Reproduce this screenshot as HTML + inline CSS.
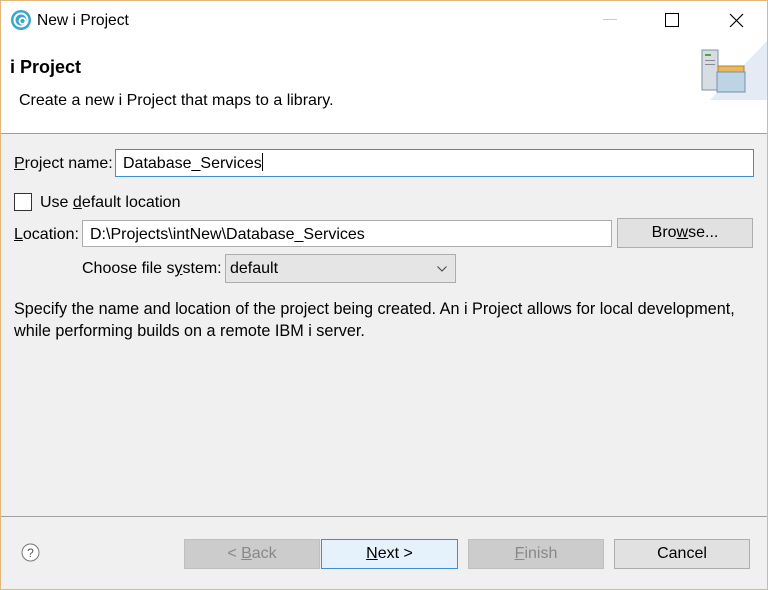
<!DOCTYPE html>
<html><head><style>
*{margin:0;padding:0;box-sizing:border-box}
body{width:768px;height:590px;overflow:hidden;background:#f0f0f0;font-family:"Liberation Sans",sans-serif;font-size:16px;color:#000;position:relative}
.a{position:absolute;white-space:nowrap}
.frame{position:absolute;left:0;top:0;width:768px;height:590px;border:1px solid #e2b77a;pointer-events:none}
.inp{position:absolute;background:#fff;border:1px solid #adadad;padding-left:7px;line-height:24px}
.btn{position:absolute;border:1px solid #adadad;background:#e1e1e1;text-align:center;line-height:28px}
u{text-decoration:underline}
</style></head><body>
<div class="a" style="left:0;top:0;width:768px;height:133px;background:#fff"></div>
<div class="a" style="left:0;top:133px;width:768px;height:1px;background:#a0a0a0"></div>
<svg class="a" style="left:10px;top:9px" width="22" height="22" viewBox="0 0 22 22"><circle cx="11" cy="11" r="10" fill="#3aa6c9"/><circle cx="11" cy="11" r="6.5" fill="none" stroke="#fff" stroke-width="2"/><circle cx="12.5" cy="12" r="3" fill="none" stroke="#fff" stroke-width="1.8"/></svg>
<div class="a" style="left:37px;top:12px;font-size:15.6px">New i Project</div>
<div class="a" style="left:603px;top:19px;width:14px;height:1px;background:#ccc"></div>
<div class="a" style="left:665px;top:13px;width:14px;height:14px;border:1px solid #000"></div>
<svg class="a" style="left:729px;top:13px" width="15" height="15"><path d="M1 1L14 14M14 1L1 14" stroke="#000" stroke-width="1.2"/></svg>
<div class="a" style="left:10px;top:57px;font-size:18px;font-weight:bold">i Project</div>
<div class="a" style="left:19px;top:92px">Create a new i Project that maps to a library.</div>
<svg class="a" style="left:690px;top:40px" width="78" height="60"><path d="M78 0 L78 60 L20 60 Z" fill="#e4ebf5"/><rect x="12" y="10" width="16" height="40" fill="#d8dde4" stroke="#8090a0"/><rect x="15" y="14" width="6" height="2" fill="#4a4"/><rect x="15" y="20" width="10" height="1" fill="#889"/><rect x="15" y="24" width="10" height="1" fill="#889"/><rect x="28" y="26" width="26" height="16" fill="#e8b860" stroke="#b08030"/><rect x="27" y="32" width="28" height="20" fill="#bcd4e4" stroke="#7890a8"/></svg>

<div class="a" style="left:14px;top:155px"><u>P</u>roject name:</div>
<div class="inp" style="left:115px;top:149px;width:639px;height:28px;border-color:#3c8fd0;line-height:27px">Database_Services<span style="display:inline-block;width:1px;height:18px;background:#000;vertical-align:-3px"></span></div>
<div class="a" style="left:14px;top:193px;width:18px;height:18px;border:1px solid #333;background:#fff"></div>
<div class="a" style="left:40px;top:194px">Use <u>d</u>efault location</div>
<div class="a" style="left:14px;top:226px"><u>L</u>ocation:</div>
<div class="inp" style="left:82px;top:220px;width:530px;height:27px;line-height:27px">D:\Projects\intNew\Database_Services</div>
<div class="btn" style="left:617px;top:218px;width:136px;height:30px">Bro<u>w</u>se...</div>
<div class="a" style="left:82px;top:260px">Choose file s<u>y</u>stem:</div>
<div class="a" style="left:225px;top:254px;width:231px;height:29px;background:#e5e5e5;border:1px solid #adadad;padding-left:4px;line-height:28px">default
<svg style="position:absolute;right:8px;top:11px" width="10" height="6"><path d="M0.5 0.5L5 5L9.5 0.5" fill="none" stroke="#444"/></svg></div>
<div class="a" style="left:14px;top:298px;line-height:22px;font-size:16.2px">Specify the name and location of the project being created. An i Project allows for local development,<br>while performing builds on a remote IBM i server.</div>

<div class="a" style="left:0;top:516px;width:768px;height:1px;background:#a0a0a0"></div>
<svg class="a" style="left:21px;top:543px" width="19" height="19"><circle cx="9.5" cy="9.5" r="8.5" fill="#fff" stroke="#777"/><text x="9.5" y="14" font-size="12" text-anchor="middle" fill="#555" font-family="Liberation Sans">?</text></svg>
<div class="btn" style="left:184px;top:539px;width:136px;height:30px;background:#cccccc;border-color:#bfbfbf;color:#888">&lt; <u>B</u>ack</div>
<div class="btn" style="left:321px;top:539px;width:137px;height:30px;background:#e5f1fb;border-color:#3c8fd0"><u>N</u>ext &gt;</div>
<div class="btn" style="left:468px;top:539px;width:136px;height:30px;background:#cccccc;border-color:#bfbfbf;color:#888"><u>F</u>inish</div>
<div class="btn" style="left:614px;top:539px;width:136px;height:30px">Cancel</div>
<div class="frame"></div>
</body></html>
